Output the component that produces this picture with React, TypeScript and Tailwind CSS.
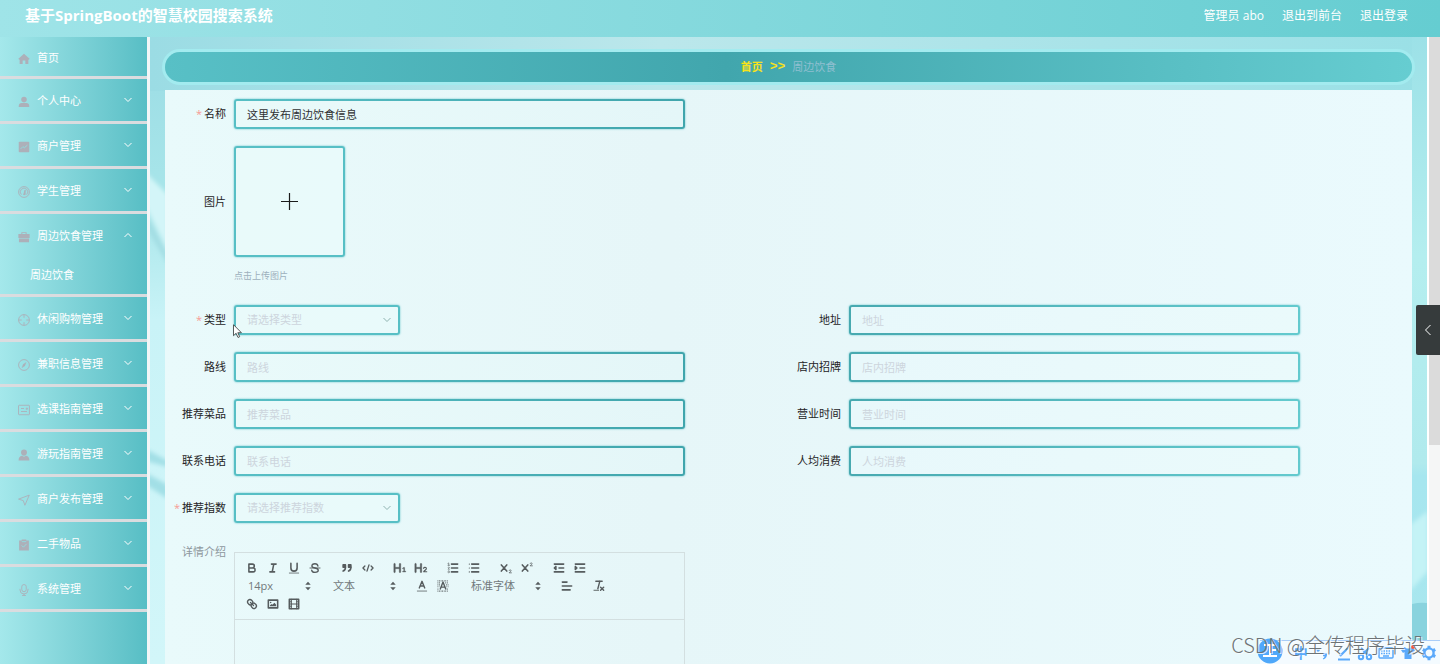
import type { ReactNode } from "react";

const INPUT_FILL =
  "h-[30px] rounded-[3px] border-2 border-transparent px-[11px] text-[11px] text-[#303133] outline-none placeholder:text-[#cdd5dd]";
const LEFT_EDGE =
  "shadow-[0_0_2px_#57bfc5] [background:linear-gradient(90deg,#e9fafa,#e4f6f8)_padding-box,linear-gradient(90deg,#57bfc5,#40a5ac)_border-box]";
const RIGHT_EDGE =
  "shadow-[0_0_2px_#57bfc5] [background:linear-gradient(90deg,#e8f8fb,#eafafb)_padding-box,linear-gradient(90deg,#47a9b0,#63cace)_border-box]";
const SHORT_EDGE =
  "shadow-[0_0_2px_#57bfc5] [background:linear-gradient(90deg,#e9fafa,#e9fafb)_padding-box,linear-gradient(90deg,#57bfc5,#57bfc5)_border-box]";

/* ---------- sidebar ---------- */

const glyphs: Record<string, ReactNode> = {
  home: <path fill="currentColor" d="M8 1 .5 7.800 1.600 9l.6-.5V14.500h4V10h3.600v4.500h4V8.500l.6.5 1.100-1.200z" />,
  user: (
    <g fill="currentColor">
      <circle cx="8" cy="4.800" r="3.700" />
      <path d="M1 14.800v-1.500c0-2.500 1.500-3.900 4-3.900h6c2.500 0 4 1.400 4 3.900v1.500z" />
    </g>
  ),
  chart: (
    <>
      <rect x="1" y="1" width="14" height="14" rx="1" fill="currentColor" />
      <path d="m3.500 10.500 3-3 2 1.500 4-3.500" fill="none" stroke="#8edce1" strokeWidth="1.200" />
    </>
  ),
  gauge: (
    <g fill="none" stroke="currentColor" strokeWidth="1.200">
      <circle cx="8" cy="8" r="7.200" />
      <path d="M4.500 11.500a5 5 0 1 1 7 0" />
      <path d="M7.500 11.500 9.500 5.500v6z" fill="currentColor" />
    </g>
  ),
  bag: (
    <g fill="currentColor">
      <path d="M4.500 4V1.500h7V4h-1.300V2.800H5.800V4z" />
      <path d="M.5 4h15v5.200H.5zM1.300 10h13.400v5H1.300z" />
    </g>
  ),
  aim: (
    <g fill="none" stroke="currentColor" strokeWidth="1.200">
      <circle cx="8" cy="8" r="7.200" />
      <path d="M8 1v4M8 11v4M1 8h4M11 8h4" />
    </g>
  ),
  compass: (
    <g fill="none" stroke="currentColor" strokeWidth="1.200">
      <circle cx="8" cy="8" r="7.200" />
      <path d="M10.800 4.500 9 9.200l-3.800 2.500L7 7z" fill="currentColor" strokeWidth=".4" />
    </g>
  ),
  card: (
    <g fill="none" stroke="currentColor" strokeWidth="1.200">
      <rect x=".7" y="1.700" width="14.600" height="12.600" rx="1" />
      <path d="M4 6h4M4 10h8M11 5.500h1.500v1.500H11z" />
    </g>
  ),
  custom: (
    <g fill="currentColor">
      <path d="M8 .5a4 4 0 0 1 4 4C12 7 10 9 8 9S4 7 4 4.500a4 4 0 0 1 4-4" />
      <path d="M.8 15.200c0-3.700 1.400-5.400 4.400-6.200L8 10.300 10.800 9c3 .8 4.400 2.500 4.400 6.200z" />
    </g>
  ),
  send: (
    <path d="M15 1.500.8 6.800l6.200 2L9.200 15z" fill="none" stroke="currentColor" strokeWidth="1.200" strokeLinejoin="round" />
  ),
  claim: (
    <>
      <path fill="currentColor" d="M1.500 2H5V.8h6V2h3.500v13.300h-13z" />
      <path d="M5 3.500h6M4.800 8.500l2.400 2.400 4.200-4.400" fill="none" stroke="#8edce1" strokeWidth="1.200" />
    </>
  ),
  mic: (
    <g fill="none" stroke="currentColor" strokeWidth="1.200">
      <rect x="5" y=".7" width="6" height="9.600" rx="3" />
      <path d="M2.700 6.500V8a5.300 5.300 0 0 0 10.600 0V6.500M8 13.300v2M5.500 15.300h5" />
    </g>
  ),
};

const menu = [
  { label: "个人中心", icon: "user" },
  { label: "商户管理", icon: "chart" },
  { label: "学生管理", icon: "gauge" },
  { label: "周边饮食管理", icon: "bag", child: "周边饮食" },
  { label: "休闲购物管理", icon: "aim" },
  { label: "兼职信息管理", icon: "compass" },
  { label: "选课指南管理", icon: "card" },
  { label: "游玩指南管理", icon: "custom" },
  { label: "商户发布管理", icon: "send" },
  { label: "二手物品", icon: "claim" },
  { label: "系统管理", icon: "mic" },
];

function MenuIcon({ name }: { name: string }) {
  return (
    <svg viewBox="0 0 16 16" className="h-3 w-3 shrink-0 text-[#adb0b9]" aria-hidden="true">
      {glyphs[name]}
    </svg>
  );
}

function Chevron({ up, className }: { up?: boolean; className: string }) {
  return (
    <svg viewBox="0 0 10 6" className={className} fill="none" stroke="currentColor" aria-hidden="true">
      <path d={up ? "M1.500 5 5 1.500 8.500 5" : "M1.500 1 5 4.500 8.500 1"} />
    </svg>
  );
}

const CELL = "border-b-[3px] border-[#dadcdf] bg-linear-to-r from-[#a4e8eb] to-[#57bec5]";

function Sidebar() {
  return (
    <nav className="flex w-[150px] shrink-0 flex-col border-r-[3px] border-[#f2f6f7] text-[11px] text-white">
      <div className={CELL}>
        <a href="#home" className="flex h-[39px] items-center gap-[7px] pt-1 pl-[18px]">
          <MenuIcon name="home" />
          首页
        </a>
      </div>
      {menu.map((m) => (
        <div key={m.label} className={CELL}>
          <button type="button" className="flex h-[42px] w-full items-center gap-[7px] pt-[3px] pr-[14px] pl-[18px]">
            <MenuIcon name={m.icon} />
            <span className="flex-1 text-left whitespace-nowrap">{m.label}</span>
            <Chevron up={!!m.child} className="mb-1 h-[6px] w-[10px]" />
          </button>
          {m.child && (
            <a href="#food" className="flex h-[38px] items-center pl-[30px]">
              {m.child}
            </a>
          )}
        </div>
      ))}
      <div className="flex-1 bg-linear-to-r from-[#a4e8eb] to-[#57bec5]" />
    </nav>
  );
}

/* ---------- form ---------- */

function Label({ htmlFor, required, muted, children }: { htmlFor: string; required?: boolean; muted?: boolean; children: ReactNode }) {
  return (
    <label
      htmlFor={htmlFor}
      className={`w-[69px] shrink-0 pr-2 text-right text-[11px] leading-[30px] whitespace-nowrap ${muted ? "text-[#8d979d]" : "text-[#1f2426]"}`}
    >
      {required && <span className="mr-[2px] text-[#f79a94]">*</span>}
      {children}
    </label>
  );
}

function TextField({ id, label, required, value, right }: { id: string; label: string; required?: boolean; value?: string; right?: boolean }) {
  return (
    <div className="flex pr-[95px]">
      <Label htmlFor={id} required={required}>
        {label}
      </Label>
      <input id={id} placeholder={label} defaultValue={value} className={`min-w-0 flex-1 ${INPUT_FILL} ${right ? RIGHT_EDGE : LEFT_EDGE}`} />
    </div>
  );
}

function SelectField({ id, label, hint }: { id: string; label: string; hint: string }) {
  return (
    <div className="flex">
      <Label htmlFor={id} required>
        {label}
      </Label>
      <div className="grid w-[166px] items-center">
        <select id={id} className={`col-start-1 row-start-1 w-full appearance-none text-[#cdd5dd]! ${INPUT_FILL} ${SHORT_EDGE}`}>
          <option>{hint}</option>
        </select>
        <Chevron className="pointer-events-none col-start-1 row-start-1 mr-2 h-[6px] w-[10px] justify-self-end text-[#8fb3b0]" />
      </div>
    </div>
  );
}

/* ---------- rich text editor ---------- */

const tools: Record<string, ReactNode> = {
  bold: <path d="M5 4h4.500a2.500 2.500 0 0 1 0 5H5zM5 9h5.500a2.500 2.500 0 0 1 0 5H5z" />,
  italic: <path d="M7 4h6M5 14h6M8 14l2-10" />,
  underline: (
    <>
      <path d="M5 3v6a4 4 0 0 0 8 0V3" />
      <path d="M3 15.500h12" strokeWidth="1" />
    </>
  ),
  strike: (
    <>
      <path d="M2.500 9h13" strokeWidth="1.200" />
      <path d="M12.800 6.500C12.500 4.500 11 3.500 9 3.500c-2.500 0-4 1.200-4 2.900C5 8 6.500 8.600 9 9c2.700.500 4.200 1.200 4.200 3S11.500 14.700 9 14.700c-2.300 0-4-1-4.300-3" strokeWidth="1.700" />
    </>
  ),
  quote: (
    <g fill="currentColor">
      <rect x="4" y="5" width="3" height="3" />
      <rect x="11" y="5" width="3" height="3" />
      <path d="M7 8c0 4.031-3 5-3 5M14 8c0 4.031-3 5-3 5" fill="none" />
    </g>
  ),
  code: <path d="M5 6.500 2.500 9 5 11.500M13 6.500 15.500 9 13 11.500M10.300 5 7.700 13" strokeWidth="1.700" />,
  h1: (
    <path
      fill="currentColor"
      stroke="currentColor"
      strokeWidth=".4"
      d="M10 4v10a1 1 0 0 1-2 0v-4H3v4a1 1 0 0 1-2 0V4a1 1 0 0 1 2 0v4h5V4a1 1 0 0 1 2 0m6.068 9.209H14.980V8.598a.600.600 0 0 0-.605-.605.627.627 0 0 0-.4.142l-1.595.950a.550.550 0 0 0 .475.985l.9-.450v3.589h-1.100a.500.500 0 1 0 0 1h3.423a.500.500 0 1 0-.010-1"
    />
  ),
  h2: (
    <>
      <path fill="currentColor" stroke="currentColor" strokeWidth=".4" d="M10 4v10a1 1 0 0 1-2 0v-4H3v4a1 1 0 0 1-2 0V4a1 1 0 0 1 2 0v4h5V4a1 1 0 0 1 2 0" />
      <path d="M12.300 9.500c.3-1.800 3.700-1.800 3.600.3-.1 1.500-2.400 2.200-3.500 4h4" strokeWidth="1.400" />
    </>
  ),
  ol: (
    <>
      <path d="M7 4h8M7 9h8M7 14h8" />
      <path d="M2.500 5.500h2M3.500 5.500v-3l-1 .5M4.500 10.500h-2c0-1 1.900-1.200 1.900-2.100 0-.9-1.700-.8-1.900-.1M2.500 14.800c.7.600 2 .4 2-.4 0-.6-.5-.7-1-.7.500 0 .9-.2.900-.6 0-.7-1.300-.8-1.800-.2" strokeWidth=".8" />
    </>
  ),
  ul: (
    <>
      <path d="M6 4h9M6 9h9M6 14h9" />
      <path d="M3 4h.01M3 9h.01M3 14h.01" strokeWidth="1.600" />
    </>
  ),
  sub: (
    <>
      <path d="m3 5 7 8M10 5l-7 8" />
      <path d="M13 12.300c.3-1.200 2.600-1.200 2.600.2 0 .9-1.900 1.500-2.600 2.700h2.900" strokeWidth="1" />
    </>
  ),
  sup: (
    <>
      <path d="m3 5 7 8M10 5l-7 8" />
      <path d="M13 3.300c.3-1.200 2.600-1.200 2.600.2 0 .9-1.900 1.500-2.600 2.700h2.900" strokeWidth="1" />
    </>
  ),
  outdent: (
    <>
      <path d="M3 14h12M3 4h12M9 9h6" />
      <path d="M5 7v4L3 9z" fill="currentColor" />
    </>
  ),
  indent: (
    <>
      <path d="M3 14h12M3 4h12M9 9h6" />
      <path d="M3 7v4l2-2z" fill="currentColor" />
    </>
  ),
  color: (
    <>
      <path d="M3 15.500h12" strokeWidth="1" />
      <path d="M5.500 11.500 9 3l3.500 8.500M6.500 9h5" strokeWidth="1.800" />
    </>
  ),
  background: (
    <>
      <path d="M2 2.500h14M2 15.500h14M2 5h4M12 5h4M2 7.500h3M13 7.500h3M2 10h2.500M13.500 10H16M2 13h2M14 13h2" strokeWidth="1.500" strokeDasharray="1 1" strokeLinecap="butt" />
      <path d="M5.500 13 9 4l3.500 9M6.500 10.500h5" strokeWidth="1.800" />
    </>
  ),
  align: <path d="M3 9h12M3 14h10M3 4h6" />,
  clean: (
    <>
      <path d="M5 3h8" />
      <path d="M10 3 7.500 12.500M11 10.500l4 4M15 10.500l-4 4" strokeWidth="1.800" />
      <path d="M2.500 14.500h6" strokeWidth="1.200" />
    </>
  ),
  link: (
    <>
      <path d="m7 7 4 4" strokeWidth="1.600" />
      <path
        strokeWidth="1.800"
        d="M8.900 4.577a3.476 3.476 0 0 1 .360 4.679A3.476 3.476 0 0 1 4.577 8.900C3.185 7.500 2.035 6.400 4.217 4.217S7.500 3.185 8.900 4.577zM13.423 9.100a3.476 3.476 0 0 0-4.679-.360 3.476 3.476 0 0 0 .360 4.679c1.392 1.392 2.500 2.542 4.679.360s1.032-3.287-.360-4.679z"
      />
    </>
  ),
  image: (
    <>
      <rect x="3" y="4" width="12" height="10" />
      <path d="M5 12v-1l2-2 1 1 3-2.500 2 2.500v2z" fill="currentColor" stroke="none" />
      <circle cx="6" cy="7" r="1" fill="currentColor" stroke="none" />
    </>
  ),
  video: (
    <>
      <rect x="3" y="3" width="12" height="12" />
      <path d="M5.500 3v12M12.500 3v12M5.500 9h7" strokeWidth="1.500" />
      <path d="M3 6h2.500M3 9h2.500M3 12h2.500M12.500 6H15M12.500 9H15M12.500 12H15" strokeWidth="1" />
    </>
  ),
};

function Tools({ names }: { names: string[] }) {
  return (
    <span className="mr-[11px] flex">
      {names.map((n) => (
        <button key={n} type="button" aria-label={n} className="flex h-[18px] w-[21px] items-center justify-center">
          <svg viewBox="0 0 18 18" className="h-[14px] w-[14px]" fill="none" stroke="currentColor" strokeWidth="2" strokeLinecap="round" strokeLinejoin="round">
            {tools[n]}
          </svg>
        </button>
      ))}
    </span>
  );
}

function Picker({ value, name, wide }: { value: string; name: string; wide?: boolean }) {
  return (
    <span className={`mr-[11px] grid items-center ${wide ? "w-[81px]" : "w-[74px]"}`}>
      <select aria-label={name} className="col-start-1 row-start-1 h-[18px] w-full appearance-none bg-transparent pl-[7px] text-[11px] text-[#72797c] outline-none">
        <option>{value}</option>
      </select>
      <svg viewBox="0 0 18 18" className="pointer-events-none col-start-1 row-start-1 h-[14px] w-[14px] justify-self-end" fill="currentColor">
        <path d="m5.500 7.500 3.500-4 3.500 4zM5.500 10.500l3.500 4 3.500-4z" />
      </svg>
    </span>
  );
}

function Editor() {
  return (
    <div className="flex pr-[95px]">
      <Label htmlFor="detail" muted>
        详情介绍
      </Label>
      <div className="mt-[15px] min-w-0 flex-1 border border-[#d3dfe0]">
        <div className="flex flex-wrap border-b border-[#d3dfe0] px-[6px] py-[6px] text-[#565c5e]">
          <Tools names={["bold", "italic", "underline", "strike"]} />
          <Tools names={["quote", "code"]} />
          <Tools names={["h1", "h2"]} />
          <Tools names={["ol", "ul"]} />
          <Tools names={["sub", "sup"]} />
          <Tools names={["outdent", "indent"]} />
          <Picker name="字号" value="14px" />
          <Picker name="标题" value="文本" />
          <Tools names={["color", "background"]} />
          <Picker name="字体" value="标准字体" wide />
          <Tools names={["align"]} />
          <Tools names={["clean"]} />
          <Tools names={["link", "image", "video"]} />
        </div>
        <textarea id="detail" className="block h-[300px] w-full resize-none bg-transparent p-3 text-[11px] outline-none" />
      </div>
    </div>
  );
}

function Form() {
  return (
    <form className="relative min-h-0 flex-1 overflow-hidden bg-linear-to-r from-[#e9fafb] via-[#e6f6f8] via-40% to-[#eafafd] pt-[9px] pr-[17px]">
      <div className="grid grid-cols-2 gap-y-[17px]">
        <TextField id="name" label="名称" required value="这里发布周边饮食信息" />
        <div className="col-start-1 flex">
          <div className="flex h-[111px] items-center">
            <Label htmlFor="picture">图片</Label>
          </div>
          <div className="pb-1">
            <button id="picture" type="button" aria-label="上传图片" className={`flex h-[111px] w-[111px] items-center justify-center rounded-[3px] border-2 border-transparent ${SHORT_EDGE}`}>
              <svg viewBox="0 0 17 17" className="h-[17px] w-[17px]" stroke="#1a1a1a" strokeWidth="1.200">
                <path d="M0 8.500h17M8.500 0v17" />
              </svg>
            </button>
            <p className="mt-[11px] text-[9px] leading-4 text-[#9db0bd]">点击上传图片</p>
          </div>
        </div>
        <div className="col-start-1">
          <SelectField id="type" label="类型" hint="请选择类型" />
        </div>
        <TextField id="address" label="地址" right />
        <TextField id="route" label="路线" />
        <TextField id="sign" label="店内招牌" right />
        <TextField id="dish" label="推荐菜品" />
        <TextField id="hours" label="营业时间" right />
        <TextField id="phone" label="联系电话" />
        <TextField id="cost" label="人均消费" right />
        <SelectField id="score" label="推荐指数" hint="请选择推荐指数" />
      </div>
      <div className="mt-[14px] grid grid-cols-2">
        <Editor />
      </div>
    </form>
  );
}

/* Soft silk-like backdrop that shows in the margins round the form. */
function Backdrop() {
  return (
    <svg viewBox="0 0 1277 627" preserveAspectRatio="none" className="absolute inset-0 h-full w-full" aria-hidden="true">
      <defs>
        <linearGradient id="top" x1="0" x2="1">
          <stop offset="0" stopColor="#9bdce4" />
          <stop offset=".4" stopColor="#bbe7eb" />
          <stop offset="1" stopColor="#9ae0e6" />
        </linearGradient>
        <linearGradient id="left" x1="0" x2="0" y1="0" y2="1">
          <stop offset="0" stopColor="#9fdfe6" />
          <stop offset=".2" stopColor="#a9e6ea" />
          <stop offset=".4" stopColor="#c9f3f7" />
          <stop offset="1" stopColor="#d2f6f9" />
        </linearGradient>
        <linearGradient id="right" x1="0" x2="0" y1="0" y2="1">
          <stop offset="0" stopColor="#9ce1e7" />
          <stop offset=".35" stopColor="#b4eeef" />
          <stop offset=".68" stopColor="#b0eaed" />
          <stop offset=".7" stopColor="#a6e6ef" />
          <stop offset="1" stopColor="#a9e7ee" />
        </linearGradient>
        <filter id="soft">
          <feGaussianBlur stdDeviation="2" />
        </filter>
      </defs>
      <rect width="1277" height="627" fill="url(#top)" />
      <rect y="54" width="200" height="573" fill="url(#left)" />
      <rect x="1262" width="15" height="627" fill="url(#right)" />
      <g filter="url(#soft)">
        <path d="M-4 136 18 158v55L-4 170z" fill="#d3f5f8" />
        <path d="M-4 176 18 218v10L-4 190z" fill="#a3dde3" />
        <path d="M-4 412 18 424v6L-4 424zM-4 436 18 448v14L-4 448z" fill="#a2dfe6" />
        <path d="M1260 488l18-14v60l-18 20z" fill="#c4f3f6" />
      </g>
      <path d="M1262 567q8-2 15-1v61h-15z" fill="#89d3de" />
    </svg>
  );
}

/* ---------- floating pieces ---------- */

function InputMethodBar() {
  return (
    <div className="absolute right-0 bottom-0 flex h-6 w-[180px] items-center justify-between border-t border-[#a9cdf8] bg-[#f4fbff] text-[#5aa9fb]">
      <svg viewBox="0 0 26 26" className="-mt-1 -ml-[3px] h-[26px] w-[26px]">
        <circle cx="13" cy="13" r="12.500" fill="#4fa8fa" />
        <path d="M7 7h12M13 7v10M6 18h14M15 12h4" stroke="#fff" strokeWidth="2" fill="none" />
      </svg>
      <div className="grid w-[150px] grid-cols-7 items-center justify-items-center">
        <span className="text-[14px] leading-5 font-bold">中</span>
        <svg viewBox="0 0 16 16" className="h-4 w-4" fill="currentColor">
          <circle cx="4" cy="5" r="1.800" />
          <path d="M9 8.500h4c.3 3-1 5-3.500 6l-.7-1.200c1.200-.5 1.700-1.200 1.700-2.100H9z" />
        </svg>
        <svg viewBox="0 0 16 16" className="h-4 w-4" fill="none" stroke="currentColor" strokeWidth="2.200">
          <path d="M4 11 12 3M2 14.500h12" />
        </svg>
        <svg viewBox="0 0 16 16" className="h-4 w-4" fill="none" stroke="currentColor" strokeWidth="2">
          <circle cx="4" cy="12" r="2.200" />
          <circle cx="12" cy="12" r="2.200" />
          <path d="m5 10 7-7M11 10 4 3" />
        </svg>
        <svg viewBox="0 0 16 16" className="h-4 w-4" fill="none" stroke="currentColor" strokeWidth="1.500">
          <rect x="1" y="3" width="14" height="10" rx="1" />
          <path d="M3 6h10M3 8.500h10" strokeDasharray="1.500 1" />
          <path d="M5 11h6" />
        </svg>
        <svg viewBox="0 0 16 16" className="h-4 w-4" fill="currentColor">
          <path d="M5 2 1 5l2 3 1.500-1v7h7V7L13 8l2-3-4-3c-1 2-5 2-6 0" />
          <circle cx="13" cy="2" r="2" fill="#f4593f" />
        </svg>
        <svg viewBox="0 0 16 16" className="h-4 w-4" fill="none" stroke="currentColor">
          <circle cx="8" cy="8" r="4.600" strokeWidth="2.400" />
          <path d="M8 .8v2.400M8 12.800v2.400M1.800 4.400l2 1.200M12.200 10.400l2 1.200M1.800 11.600l2-1.200M12.200 5.600l2-1.200" strokeWidth="3" />
        </svg>
      </div>
    </div>
  );
}

export default function App() {
  return (
    <div className="relative flex h-screen flex-col overflow-hidden font-['Open_Sans','Noto_Sans_CJK_SC',sans-serif]">
      <header className="flex h-[37px] shrink-0 items-center justify-between bg-linear-to-r from-[#9fe4e8] to-[#65cdd1] pr-8 pb-[6px] pl-[25px] text-white">
        <h1 className="text-[15px] font-bold">基于SpringBoot的智慧校园搜索系统</h1>
        <div className="flex gap-[18px] text-[12px]">
          <span>管理员 abo</span>
          <a href="#front">退出到前台</a>
          <a href="#logout">退出登录</a>
        </div>
      </header>

      <div className="flex min-h-0 flex-1">
        <Sidebar />
        <main className="relative flex min-w-0 flex-1 flex-col px-[15px] pt-[15px]">
          <Backdrop />
          <div className="relative mb-2 flex h-[30px] shrink-0 items-center justify-center gap-[7px] rounded-full bg-linear-to-r from-[#58c0c6] via-[#41a6ad] via-45% to-[#66cdd1] text-[11px] ring-3 ring-[#a3ebef]">
            <a href="#home" className="font-bold text-[#f6e21c]">
              首页
            </a>
            <span className="font-['Liberation_Mono',monospace] text-[13px] font-bold text-[#f6e21c]">&gt;&gt;</span>
            <span className="text-[#8fbfd0]">周边饮食</span>
          </div>
          <Form />
        </main>
        <div className="w-[13px] shrink-0 border-l-2 border-white bg-[#f5f6f6]">
          <div className="h-[65%] bg-[#dbdbdb]" />
        </div>
      </div>

      <button type="button" aria-label="展开" className="absolute top-[305px] right-0 flex h-[50px] w-6 items-center justify-center rounded-l-[2px] bg-[#363b3c] text-white">
        <svg viewBox="0 0 8 12" className="h-3 w-2" fill="none" stroke="currentColor">
          <path d="M6.500 1 1.500 6l5 5" />
        </svg>
      </button>

      <svg viewBox="0 0 9 14" className="absolute top-[324px] left-[233px] h-[14px] w-[9px]" aria-hidden="true">
        <path d="M.5.7v11l2.600-2.400 1.900 4.200 1.700-.8-1.900-4h3.600z" fill="#fff" stroke="#333" strokeWidth=".8" />
      </svg>

      <InputMethodBar />
      <div className="absolute right-[15px] bottom-1 font-['Noto_Sans_CJK_SC',sans-serif] text-[20px] leading-[30px] font-light whitespace-nowrap text-[#6d7376] [text-shadow:1px_1px_0_#ffffffcc]">
        CSDN @全传程序毕设
      </div>
    </div>
  );
}
